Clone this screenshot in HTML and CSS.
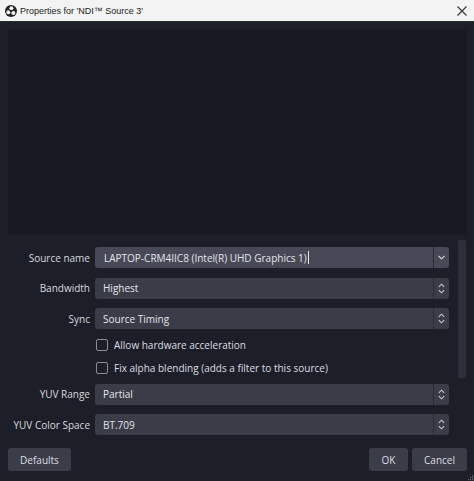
FILE: index.html
```html
<!DOCTYPE html>
<html>
<head>
    <title>Properties for 'NDI™ Source 3'</title>
    <link rel="stylesheet" href="styles.css">
</head>
<body>
    <div class="titlebar">
        <svg class="app-icon" width="12" height="12" viewBox="0 0 12 12">
            <circle cx="6" cy="6" r="6" fill="#222"/>
            <circle cx="6.4" cy="3.2" r="2" fill="#fff"/>
            <circle cx="3.4" cy="7.3" r="2" fill="#fff"/>
            <circle cx="8.3" cy="7.9" r="2" fill="#fff"/>
            <circle cx="6" cy="6" r="1.3" fill="#222"/>
        </svg>
        <span class="title">Properties for 'NDI™ Source 3'</span>
        <svg class="close" width="10" height="10" viewBox="0 0 10 10">
            <path d="M0.5 0.5 L9.5 9.5 M9.5 0.5 L0.5 9.5" stroke="#333" stroke-width="1.1"/>
        </svg>
    </div>

    <div class="window">
        <div class="preview"></div>

        <div class="props">
            <div class="form">
                <label class="label">Source name</label>
                <div class="combo combo-hover">
                    <span class="value">LAPTOP-CRM4IIC8 (Intel(R) UHD Graphics 1)<span class="caret"></span></span>
                    <span class="arrow">
                        <svg width="7" height="5" viewBox="0 0 7 5"><path d="M0.5 0.8 L3.5 3.8 L6.5 0.8" fill="none" stroke="#d0d0d0" stroke-width="1.2"/></svg>
                    </span>
                </div>

                <label class="label">Bandwidth</label>
                <div class="combo">
                    <span class="value">Highest</span>
                    <span class="arrow spin">
                        <svg width="7" height="11" viewBox="0 0 7 11"><path d="M0.8 3.8 L3.5 1.2 L6.2 3.8 M0.8 7.2 L3.5 9.8 L6.2 7.2" fill="none" stroke="#c8c8c8" stroke-width="1.1"/></svg>
                    </span>
                </div>

                <label class="label">Sync</label>
                <div class="combo">
                    <span class="value">Source Timing</span>
                    <span class="arrow spin">
                        <svg width="7" height="11" viewBox="0 0 7 11"><path d="M0.8 3.8 L3.5 1.2 L6.2 3.8 M0.8 7.2 L3.5 9.8 L6.2 7.2" fill="none" stroke="#c8c8c8" stroke-width="1.1"/></svg>
                    </span>
                </div>

                <span></span>
                <div class="check"><span class="box"></span>Allow hardware acceleration</div>

                <span></span>
                <div class="check"><span class="box"></span>Fix alpha blending (adds a filter to this source)</div>

                <label class="label">YUV Range</label>
                <div class="combo">
                    <span class="value">Partial</span>
                    <span class="arrow spin">
                        <svg width="7" height="11" viewBox="0 0 7 11"><path d="M0.8 3.8 L3.5 1.2 L6.2 3.8 M0.8 7.2 L3.5 9.8 L6.2 7.2" fill="none" stroke="#c8c8c8" stroke-width="1.1"/></svg>
                    </span>
                </div>

                <label class="label">YUV Color Space</label>
                <div class="combo">
                    <span class="value">BT.709</span>
                    <span class="arrow spin">
                        <svg width="7" height="11" viewBox="0 0 7 11"><path d="M0.8 3.8 L3.5 1.2 L6.2 3.8 M0.8 7.2 L3.5 9.8 L6.2 7.2" fill="none" stroke="#c8c8c8" stroke-width="1.1"/></svg>
                    </span>
                </div>
            </div>
            <div class="scrollbar"><div class="thumb"></div></div>
        </div>

        <div class="buttons">
            <button class="btn btn-defaults">Defaults</button>
            <div class="spacer"></div>
            <button class="btn btn-ok">OK</button>
            <button class="btn btn-cancel">Cancel</button>
        </div>
    </div>

    <svg class="grip" width="7" height="7" viewBox="0 0 7 7">
        <rect x="5" y="1" width="1.2" height="1.2" fill="#666"/>
        <rect x="3" y="3" width="1.2" height="1.2" fill="#666"/>
        <rect x="5" y="3" width="1.2" height="1.2" fill="#666"/>
        <rect x="1" y="5" width="1.2" height="1.2" fill="#666"/>
        <rect x="3" y="5" width="1.2" height="1.2" fill="#666"/>
        <rect x="5" y="5" width="1.2" height="1.2" fill="#666"/>
    </svg>
</body>
</html>
```

FILE: styles.css
```css
html, body {
    margin: 0;
    padding: 0;
    width: 474px;
    height: 481px;
    overflow: hidden;
}
body {
    font-family: "Open Sans", "Noto Sans", sans-serif;
    font-size: 10px;
    color: #dcdde2;
    background-color: #1d1f28;
    display: flex;
    flex-direction: column;
    position: relative;
}
.titlebar {
    height: 22px;
    flex-shrink: 0;
    background-color: #f3f3f3;
    border-bottom: 1px solid #2a2c33;
    box-sizing: border-box;
    display: flex;
    align-items: center;
    padding: 0 7px 0 5px;
    color: #1a1a1a;
    font-family: "Liberation Sans", Arial, sans-serif;
    font-size: 9px;
}
.app-icon {
    margin-right: 3px;
}
.title {
    flex: 1;
}
.window {
    flex: 1;
    display: flex;
    flex-direction: column;
    padding: 8px 8px 10px 8px;
}
.preview {
    height: 204px;
    background-color: #181a23;
    margin-right: -1px;
}
.props {
    display: flex;
    margin-top: 6px;
    height: 200px;
}
.form {
    flex: 1;
    display: grid;
    grid-template-columns: 82px 1fr;
    grid-template-rows: 21px 21px 21px 13px 13px 21px 21px;
    column-gap: 5px;
    row-gap: 9.5px;
    padding-top: 7px;
    align-content: start;
    margin-right: 9px;
}
.label {
    text-align: right;
    align-self: center;
    white-space: nowrap;
    color: #d8d9de;
}
.combo {
    display: flex;
    background-color: #3a3d48;
    border-radius: 3px;
    align-items: stretch;
}
.combo-hover {
    background-color: #474a56;
}
.value {
    flex: 1;
    display: flex;
    align-items: center;
    padding-left: 8px;
    white-space: nowrap;
    overflow: hidden;
    color: #e4e5ea;
}
.combo-hover .value {
    padding-left: 9px;
}
.caret {
    display: inline-block;
    width: 1px;
    height: 13px;
    background-color: #e8e8e8;
    margin-left: 1px;
}
.arrow {
    width: 15px;
    border-left: 1px solid #2a2c35;
    display: flex;
    align-items: center;
    justify-content: center;
}
.check {
    display: flex;
    align-items: center;
    white-space: nowrap;
    color: #dcdde2;
    margin-left: 1px;
}
.box {
    width: 10px;
    height: 10px;
    border: 1px solid #8a8c94;
    border-radius: 2px;
    margin-right: 6px;
}
.scrollbar {
    width: 8px;
}
.thumb {
    height: 138px;
    background-color: #2d303b;
    border-radius: 2px;
}
.buttons {
    margin-top: auto;
    display: flex;
    align-items: center;
    gap: 4px;
}
.spacer {
    flex: 1;
}
.btn {
    height: 23px;
    border: none;
    border-radius: 3px;
    background-color: #3a3d48;
    color: #dcdde2;
    font-family: "Open Sans", "Noto Sans", sans-serif;
    font-size: 10px;
    padding: 0;
}
.btn-defaults {
    width: 63px;
}
.btn-ok {
    width: 39px;
}
.btn-cancel {
    width: 55px;
    margin-right: -1px;
}
.grip {
    position: absolute;
    right: 0;
    bottom: 0;
}
```
